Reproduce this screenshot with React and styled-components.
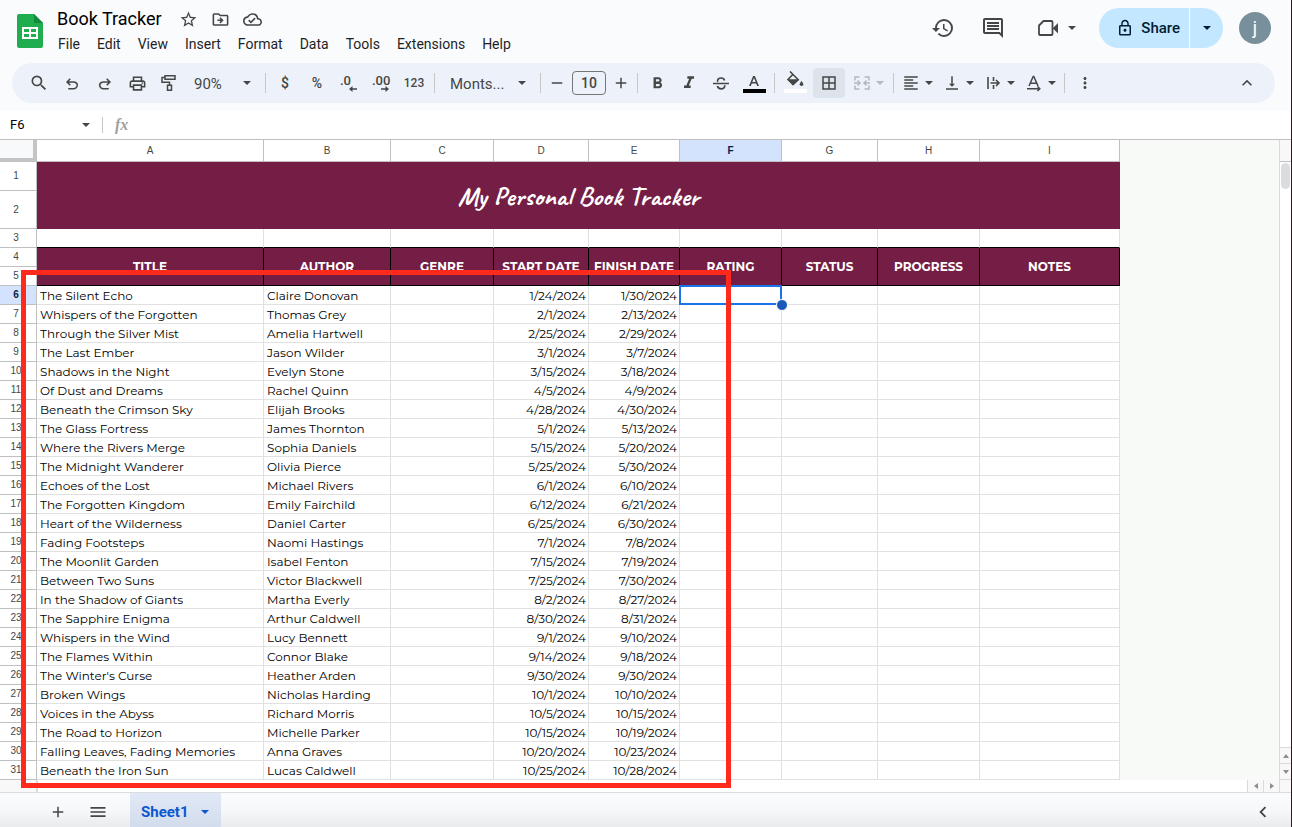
import React, {useState} from 'react'
import styled, {createGlobalStyle} from 'styled-components'
import {
    MdAdd,
    MdBorderAll,
    MdFormatAlignLeft,
    MdFormatBold,
    MdFormatItalic,
    MdHistory,
    MdKeyboardArrowLeft,
    MdKeyboardArrowUp,
    MdLockOutline,
    MdMenu,
    MdMoreVert,
    MdOutlineCloudDone,
    MdOutlineComment,
    MdOutlineDriveFileMove,
    MdOutlinePrint,
    MdRemove,
    MdSearch,
    MdStarOutline,
    MdVerticalAlignBottom,
} from 'react-icons/md'

const menus = ['File', 'Edit', 'View', 'Insert', 'Format', 'Data', 'Tools', 'Extensions', 'Help']

const columns = [
    {letter: 'A', width: 227, label: 'TITLE'},
    {letter: 'B', width: 127, label: 'AUTHOR'},
    {letter: 'C', width: 103, label: 'GENRE'},
    {letter: 'D', width: 95, label: 'START DATE'},
    {letter: 'E', width: 91, label: 'FINISH DATE'},
    {letter: 'F', width: 102, label: 'RATING'},
    {letter: 'G', width: 96, label: 'STATUS'},
    {letter: 'H', width: 102, label: 'PROGRESS'},
    {letter: 'I', width: 140, label: 'NOTES'},
]

const books = [
    ['The Silent Echo', 'Claire Donovan', '1/24/2024', '1/30/2024'],
    ['Whispers of the Forgotten', 'Thomas Grey', '2/1/2024', '2/13/2024'],
    ['Through the Silver Mist', 'Amelia Hartwell', '2/25/2024', '2/29/2024'],
    ['The Last Ember', 'Jason Wilder', '3/1/2024', '3/7/2024'],
    ['Shadows in the Night', 'Evelyn Stone', '3/15/2024', '3/18/2024'],
    ['Of Dust and Dreams', 'Rachel Quinn', '4/5/2024', '4/9/2024'],
    ['Beneath the Crimson Sky', 'Elijah Brooks', '4/28/2024', '4/30/2024'],
    ['The Glass Fortress', 'James Thornton', '5/1/2024', '5/13/2024'],
    ['Where the Rivers Merge', 'Sophia Daniels', '5/15/2024', '5/20/2024'],
    ['The Midnight Wanderer', 'Olivia Pierce', '5/25/2024', '5/30/2024'],
    ['Echoes of the Lost', 'Michael Rivers', '6/1/2024', '6/10/2024'],
    ['The Forgotten Kingdom', 'Emily Fairchild', '6/12/2024', '6/21/2024'],
    ['Heart of the Wilderness', 'Daniel Carter', '6/25/2024', '6/30/2024'],
    ['Fading Footsteps', 'Naomi Hastings', '7/1/2024', '7/8/2024'],
    ['The Moonlit Garden', 'Isabel Fenton', '7/15/2024', '7/19/2024'],
    ['Between Two Suns', 'Victor Blackwell', '7/25/2024', '7/30/2024'],
    ['In the Shadow of Giants', 'Martha Everly', '8/2/2024', '8/27/2024'],
    ['The Sapphire Enigma', 'Arthur Caldwell', '8/30/2024', '8/31/2024'],
    ['Whispers in the Wind', 'Lucy Bennett', '9/1/2024', '9/10/2024'],
    ['The Flames Within', 'Connor Blake', '9/14/2024', '9/18/2024'],
    ["The Winter's Curse", 'Heather Arden', '9/30/2024', '9/30/2024'],
    ['Broken Wings', 'Nicholas Harding', '10/1/2024', '10/10/2024'],
    ['Voices in the Abyss', 'Richard Morris', '10/5/2024', '10/15/2024'],
    ['The Road to Horizon', 'Michelle Parker', '10/15/2024', '10/19/2024'],
    ['Falling Leaves, Fading Memories', 'Anna Graves', '10/20/2024', '10/23/2024'],
    ['Beneath the Iron Sun', 'Lucas Caldwell', '10/25/2024', '10/28/2024'],
]

const Caret = () => (
    <CaretSvg viewBox='0 0 8 4' aria-hidden='true'>
        <path d='M0 0h8L4 4z' />
    </CaretSvg>
)

const SheetsLogo = () => (
    <svg width='26' height='34' viewBox='0 0 26 34' aria-hidden='true'>
        <path d='M2 0h15l9 9v23a2 2 0 0 1-2 2H2a2 2 0 0 1-2-2V2a2 2 0 0 1 2-2z' fill='#1fad50' />
        <path d='M17 0l9 9h-9z' fill='#128a3e' />
        <path d='M5 13h16v12H5zM7 15v3h5v-3zM14 15v3h5v-3zM7 20v3h5v-3zM14 20v3h5v-3z' fill='#fff' fillRule='evenodd' />
    </svg>
)

const UndoIcon = () => (
    <svg width='18' height='18' viewBox='0 -1020 960 960' fill='currentColor'>
        <path d='M280-200v-80h284q63 0 109.500-40T720-420q0-60-46.500-100T564-560H312l104 104-56 56-200-200 200-200 56 56-104 104h252q97 0 169.500 63T800-420q0 94-72.500 157T564-200H280Z' />
    </svg>
)

const RedoIcon = () => (
    <svg width='18' height='18' viewBox='0 -1020 960 960' fill='currentColor'>
        <path d='M396-200q-97 0-169.500-63T154-420q0-94 72.500-157T396-640h252L544-744l56-56 200 200-200 200-56-56 104-104H396q-63 0-109.500 40T240-420q0 60 46.500 100T396-280h284v80H396Z' />
    </svg>
)

const RollerIcon = () => (
    <svg width='18' height='18' viewBox='0 0 18 18' fill='none' stroke='currentColor' strokeWidth='1.500'>
        <path d='M5 1.750h10v3.500H5zM5 3.500H2v4.750h7.500v3M7.500 11.250h4v5h-4z' />
    </svg>
)

const DecimalIcon = ({more}) => (
    <svg width='20' height='20' viewBox='0 0 20 20'>
        <text x={more ? 1 : 1} y='12' fontFamily='Roboto, sans-serif' fontSize='13' fontWeight='500' fill='currentColor'>
            {more ? '.00' : '.0'}
        </text>
        {more
            ? <path d='M10 15.300h4.500v-2.300l3.500 3-3.500 3v-2.300H10z' fill='currentColor' />
            : <path d='M18 15.300h-4.500v-2.300l-3.500 3 3.500 3v-2.300H18z' fill='currentColor' />}
    </svg>
)

const StrikeIcon = () => (
    <svg width='18' height='18' viewBox='0 0 18 18' fill='none' stroke='currentColor'>
        <path d='M1 9.500h16' strokeWidth='1.500' />
        <path d='M12.500 6.500C12.200 4.800 11 4 9.100 4 7 4 5.600 5 5.600 6.700c0 .4.100.8.300 1.100M5.400 12c.4 1.900 1.700 2.800 3.800 2.800s3.500-1 3.500-2.700c0-.3 0-.6-.1-.9' strokeWidth='1.700' />
    </svg>
)

const FillIcon = () => (
    <svg width='24' height='24' viewBox='0 0 24 24'>
        <path d='M7 .5L15.500 9M9.800 3.500L5 8.500l5 5 5.500-5' fill='none' stroke='currentColor' strokeWidth='1.600' />
        <path d='M4.500 8.200h12L10 14.500z' fill='currentColor' />
        <path d='M18.500 10s-1.800 2-1.800 3.200a1.800 1.800 0 0 0 3.600 0c0-1.200-1.800-3.200-1.800-3.200z' fill='currentColor' />
        <path d='M1 18h23v4H1z' fill='#fff' />
    </svg>
)

const TextColorIcon = () => (
    <svg width='24' height='24' viewBox='0 0 24 24'>
        <path d='M11.100 5h1.800L17 15h-1.800l-1-2.600H9.800l-1 2.600H7zM12 6.900L10.300 11h3.400z' fill='currentColor' fillRule='evenodd' />
        <path d='M1 18h23v4H1z' fill='#000' />
    </svg>
)

const MergeIcon = () => (
    <svg width='18' height='18' viewBox='0 0 18 18' fill='none' stroke='currentColor' strokeWidth='1.500'>
        <path d='M6.500 3H2v3.500M2 11.500V15h4.500M11.500 3H16v3.500M16 11.500V15h-4.500M1 9h5.500M17 9h-5.500M4.500 6.500L7 9l-2.500 2.500M13.500 6.500L11 9l2.500 2.500' />
    </svg>
)

const OverflowIcon = () => (
    <svg width='18' height='18' viewBox='0 0 18 18' fill='none' stroke='currentColor' strokeWidth='1.600'>
        <path d='M4 3v12M9.500 3v4M9.500 11v4M6.500 9h8M12 6l3 3-3 3' />
    </svg>
)

const RotateIcon = () => (
    <svg width='18' height='18' viewBox='0 0 18 18' fill='none' stroke='currentColor' strokeWidth='1.500'>
        <path d='M4 12L8.200 2.500h.6L13 12M5.300 9.300h6.400M2 14.750h12M12.500 12.500l2.300 2.250-2.300 2.250' />
    </svg>
)

const MeetIcon = () => (
    <svg width='24' height='24' viewBox='0 0 24 24'>
        <path d='M7.500 5h8a1 1 0 0 1 1 1v12a1 1 0 0 1-1 1H4a1 1 0 0 1-1-1V9.500z' fill='none' stroke='currentColor' strokeWidth='1.800' strokeLinejoin='round' />
        <path d='M17 12l5-5v10.500l-5-5z' fill='currentColor' />
    </svg>
)

const App = () => {

    const [zoom, setZoom] = useState('90%')
    const [fontSize, setFontSize] = useState(10)
    const [cellName, setCellName] = useState('F6')

    return (
        <Page>
            <GlobalStyle />
            <TopBar>
                <SheetsLogo />
                <Document>
                    <TitleRow>
                        <DocTitle>Book Tracker</DocTitle>
                        <TitleButton aria-label='Star'><MdStarOutline size={19} /></TitleButton>
                        <TitleButton aria-label='Move'><MdOutlineDriveFileMove size={19} /></TitleButton>
                        <TitleButton aria-label='Saved to Drive'><MdOutlineCloudDone size={19} /></TitleButton>
                    </TitleRow>
                    <MenuBar>
                        {menus.map(menu => <MenuButton key={menu}>{menu}</MenuButton>)}
                    </MenuBar>
                </Document>
                <Actions>
                    <ActionButton aria-label='Version history'><MdHistory size={24} /></ActionButton>
                    <ActionButton aria-label='Comments'><MdOutlineComment size={24} /></ActionButton>
                    <MeetButton aria-label='Join a call'><MeetIcon /><Caret /></MeetButton>
                    <ShareGroup>
                        <ShareButton><MdLockOutline size={18} />Share</ShareButton>
                        <ShareMore aria-label='Sharing options'><Caret /></ShareMore>
                    </ShareGroup>
                    <Avatar aria-label='Account'>j</Avatar>
                </Actions>
            </TopBar>

            <Toolbar>
                <Tool aria-label='Search'><MdSearch size={20} /></Tool>
                <Tool $wide aria-label='Undo'><UndoIcon /></Tool>
                <Tool aria-label='Redo'><RedoIcon /></Tool>
                <Tool aria-label='Print'><MdOutlinePrint size={19} /></Tool>
                <Tool aria-label='Paint format'><RollerIcon /></Tool>
                <SelectBox $width={77}>
                    <Select aria-label='Zoom' value={zoom} onChange={e => setZoom(e.target.value)}>
                        <option>90%</option>
                        <option>100%</option>
                    </Select>
                    <Caret />
                </SelectBox>
                <Divider />
                <Tool aria-label='Currency'>$</Tool>
                <Tool aria-label='Percent'>%</Tool>
                <Tool aria-label='Fewer decimals'><DecimalIcon /></Tool>
                <Tool aria-label='More decimals'><DecimalIcon more /></Tool>
                <Tool $wide $small aria-label='More formats'>123</Tool>
                <Divider />
                <SelectBox $width={99}>
                    <Select aria-label='Font' defaultValue='Monts...' $indent>
                        <option>Monts...</option>
                    </Select>
                    <Caret />
                </SelectBox>
                <Divider />
                <StepButton aria-label='Smaller' onClick={() => setFontSize(Number(fontSize) - 1)}><MdRemove size={18} /></StepButton>
                <SizeInput aria-label='Font size' value={fontSize} onChange={e => setFontSize(e.target.value)} />
                <StepButton aria-label='Larger' onClick={() => setFontSize(Number(fontSize) + 1)}><MdAdd size={18} /></StepButton>
                <Divider />
                <Tool aria-label='Bold'><MdFormatBold size={19} /></Tool>
                <Tool aria-label='Italic'><MdFormatItalic size={20} /></Tool>
                <Tool aria-label='Strikethrough'><StrikeIcon /></Tool>
                <Tool $wide aria-label='Text color'><TextColorIcon /></Tool>
                <Divider />
                <Tool $wide aria-label='Fill color'><FillIcon /></Tool>
                <Tool $active aria-label='Borders'><MdBorderAll size={18} /></Tool>
                <DropTool $width={44} disabled aria-label='Merge cells'><MergeIcon /><Caret /></DropTool>
                <Divider />
                <DropTool $width={41} aria-label='Horizontal align'><MdFormatAlignLeft size={18} /><Caret /></DropTool>
                <DropTool $width={41} aria-label='Vertical align'><MdVerticalAlignBottom size={18} /><Caret /></DropTool>
                <DropTool $width={41} aria-label='Wrapping'><OverflowIcon /><Caret /></DropTool>
                <DropTool $width={41} aria-label='Rotation'><RotateIcon /><Caret /></DropTool>
                <Divider />
                <Tool $wide aria-label='More'><MdMoreVert size={18} /></Tool>
                <CollapseTool aria-label='Hide the menus'><MdKeyboardArrowUp size={20} /></CollapseTool>
            </Toolbar>

            <FormulaBar>
                <NameInput aria-label='Cell name' value={cellName} onChange={e => setCellName(e.target.value)} />
                <Caret />
                <NameDivider />
                <FxLabel htmlFor='formula'>fx</FxLabel>
                <FormulaInput id='formula' />
            </FormulaBar>

            <Workspace>
                <GridArea>
                    <Viewport>
                        <Table>
                            <colgroup>
                                <HeadCol />
                                {columns.map(col => <Col key={col.letter} $width={col.width} />)}
                            </colgroup>
                            <thead>
                                <Row $height={22}>
                                    <Corner />
                                    {columns.map(col => (
                                        <ColumnHead key={col.letter} scope='col' $selected={col.letter === 'F'}>{col.letter}</ColumnHead>
                                    ))}
                                </Row>
                            </thead>
                            <tbody>
                                <Row $height={29}>
                                    <RowHead scope='row'>1</RowHead>
                                    <Banner colSpan={9} rowSpan={2}>My Personal Book Tracker</Banner>
                                </Row>
                                <Row $height={38}>
                                    <RowHead scope='row'>2</RowHead>
                                </Row>
                                <Row $height={19}>
                                    <RowHead scope='row'>3</RowHead>
                                    {columns.map(col => <Cell key={col.letter} $aboveLabels />)}
                                </Row>
                                <Row $height={19}>
                                    <RowHead scope='row'>4</RowHead>
                                    {columns.map(col => <Label key={col.letter} rowSpan={2}>{col.label}</Label>)}
                                </Row>
                                <Row $height={19}>
                                    <RowHead scope='row'>5</RowHead>
                                </Row>
                                {books.map(([title, author, start, finish], index) => (
                                    <Row key={title} $height={19}>
                                        <RowHead scope='row' $selected={index === 0}>{index + 6}</RowHead>
                                        <Cell>{title}</Cell>
                                        <Cell>{author}</Cell>
                                        <Cell />
                                        <Cell $right>{start}</Cell>
                                        <Cell $right>{finish}</Cell>
                                        {index === 0 ? <SelectedCell /> : <Cell />}
                                        <Cell />
                                        <Cell />
                                        <Cell />
                                    </Row>
                                ))}
                            </tbody>
                        </Table>
                    </Viewport>
                    <HorizontalBar>
                        <BarStart />
                        <BarButton aria-label='Scroll left'>
                            <svg width='4' height='6' viewBox='0 0 4 6'><path d='M4 0v6L0 3z' /></svg>
                        </BarButton>
                        <BarButton aria-label='Scroll right'>
                            <svg width='4' height='6' viewBox='0 0 4 6'><path d='M0 0v6l4-3z' /></svg>
                        </BarButton>
                    </HorizontalBar>
                </GridArea>
                <VerticalBar>
                    <BarTop />
                    <Thumb />
                    <BarButton $stacked aria-label='Scroll up'>
                        <svg width='6' height='4' viewBox='0 0 6 4'><path d='M0 4h6L3 0z' /></svg>
                    </BarButton>
                    <BarButton $stacked aria-label='Scroll down'>
                        <svg width='6' height='4' viewBox='0 0 6 4'><path d='M0 0h6L3 4z' /></svg>
                    </BarButton>
                    <BarEnd />
                </VerticalBar>
                <Highlight />
            </Workspace>

            <SheetBar>
                <SheetButton aria-label='Add sheet'><MdAdd size={18} /></SheetButton>
                <SheetButton aria-label='All sheets'><MdMenu size={20} /></SheetButton>
                <SheetTab>Sheet1<Caret /></SheetTab>
                <PanelButton aria-label='Show side panel'><MdKeyboardArrowLeft size={22} /></PanelButton>
            </SheetBar>
        </Page>
    )
}

const GlobalStyle = createGlobalStyle`
    * {
        box-sizing: border-box;
    }

    body {
        margin: 0;
        font-family: Roboto, sans-serif;
        color: #1f1f1f;
    }

    button, input, select {
        font: inherit;
        color: inherit;
        border: none;
        padding: 0;
        background: none;
        outline: none;
    }

    button {
        cursor: pointer;
    }

    svg {
        flex-shrink: 0;
    }
`

const Page = styled.div`
    display: flex;
    flex-direction: column;
    height: 100vh;
    background-color: #f9fbfd;
    border-right: 1px solid #2b1c24;
    overflow: hidden;
`

const CaretSvg = styled.svg`
    width: 8px;
    height: 4px;
    fill: currentColor;
    pointer-events: none;
`

const TopBar = styled.header`
    display: flex;
    align-items: flex-start;
    height: 63px;
    padding: 0 20px 0 17px;
    flex-shrink: 0;

    > svg {
        margin-top: 14px;
    }
`

const Document = styled.div`
    padding: 7px 0 0 6px;
`

const TitleRow = styled.div`
    display: flex;
    align-items: center;
    height: 24px;
    padding-left: 8px;
    margin-bottom: 3px;
`

const DocTitle = styled.h1`
    margin: 0 11px 0 0;
    font-size: 18px;
    line-height: 24px;
    font-weight: 400;
    color: #000;
`

const TitleButton = styled.button`
    display: flex;
    align-items: center;
    justify-content: center;
    width: 32px;
    height: 24px;
    color: #444746;
`

const MenuBar = styled.nav`
    display: flex;
    gap: 1px;
    padding-left: 1px;
`

const MenuButton = styled.button`
    padding: 0 8px;
    height: 20px;
    font-size: 14px;
    line-height: 20px;
`

const Actions = styled.div`
    display: flex;
    align-items: center;
    margin-left: auto;
    padding-top: 8px;
    color: #444746;
`

const ActionButton = styled.button`
    display: flex;
    align-items: center;
    justify-content: center;
    width: 50px;
    height: 40px;
`

const MeetButton = styled(ActionButton)`
    width: 70px;
    margin-right: 11px;
    padding-left: 6px;
    gap: 8px;
`

const ShareGroup = styled.div`
    display: flex;
    gap: 1px;
    height: 40px;
    margin-right: 16px;
    border-radius: 20px;
    overflow: hidden;
    color: #001d35;
`

const ShareButton = styled.button`
    display: flex;
    align-items: center;
    gap: 7px;
    padding: 0 9px 0 17px;
    background-color: #c2e7ff;
    font-size: 15px;
    font-weight: 500;
`

const ShareMore = styled.button`
    display: flex;
    align-items: center;
    justify-content: center;
    width: 33px;
    background-color: #c2e7ff;
`

const Avatar = styled.button`
    width: 32px;
    height: 32px;
    border-radius: 50%;
    background-color: #78909c;
    color: #fff;
    font-size: 18px;
    line-height: 32px;
`

const Toolbar = styled.div`
    display: flex;
    align-items: center;
    height: 40px;
    margin: 0 16px 8px 12px;
    padding: 0 12px 0 11px;
    border-radius: 20px;
    background-color: #edf2fa;
    color: #444746;
    flex-shrink: 0;
`

const Tool = styled.button`
    display: flex;
    align-items: center;
    justify-content: center;
    flex-shrink: 0;
    width: ${props => (props.$wide ? '34px' : '32px')};
    height: 30px;
    margin: ${props => (props.$active ? '0 1px' : '0')};
    border-radius: 4px;
    background-color: ${props => (props.$active ? '#dde3ea' : 'transparent')};
    font-size: ${props => (props.$small ? '12px' : '14px')};
    font-weight: 500;
`

const CollapseTool = styled(Tool)`
    margin-left: auto;
`

const DropTool = styled.button`
    display: flex;
    align-items: center;
    justify-content: center;
    flex-shrink: 0;
    gap: 5px;
    width: ${props => props.$width}px;
    height: 30px;

    &:disabled {
        color: #b4b8bd;
    }
`

const SelectBox = styled.div`
    display: flex;
    align-items: center;
    flex-shrink: 0;
    width: ${props => props.$width}px;
    padding-right: 11px;
`

const Select = styled.select`
    appearance: none;
    flex: 1;
    min-width: 0;
    height: 30px;
    padding-top: 2px;
    padding-left: ${props => (props.$indent ? '12px' : '9px')};
    font-size: 15px;
`

const Divider = styled.span`
    width: 1px;
    height: 20px;
    margin: 0 3px;
    flex-shrink: 0;
    background-color: #c7c7c7;
`

const StepButton = styled.button`
    display: flex;
    align-items: center;
    justify-content: center;
    flex-shrink: 0;
    width: 26px;
    height: 24px;
`

const SizeInput = styled.input`
    width: 34px;
    height: 24px;
    margin: 0 2px;
    border: 1px solid #747775;
    border-radius: 4px;
    font-size: 14px;
    font-weight: 500;
    text-align: center;
    flex-shrink: 0;
`

const FormulaBar = styled.div`
    display: flex;
    align-items: center;
    height: 29px;
    flex-shrink: 0;
    background-color: #fff;
    border-bottom: 1px solid #c0c0c0;
    color: #444746;
`

const NameInput = styled.input`
    width: 82px;
    height: 20px;
    padding-left: 10px;
    padding-bottom: 2px;
    font-size: 13px;
    color: #000;
`

const NameDivider = styled.span`
    width: 1px;
    height: 16px;
    margin-left: 12px;
    background-color: #c7c7c7;
`

const FxLabel = styled.label`
    margin-left: 12px;
    font-family: 'Liberation Serif', serif;
    font-size: 16px;
    line-height: 20px;
    font-weight: 700;
    font-style: italic;
    color: #a0a0a0;
`

const FormulaInput = styled.input`
    flex: 1;
    height: 20px;
    margin-left: 12px;
    font-size: 13px;
`

const Workspace = styled.main`
    position: relative;
    display: flex;
    flex: 1;
    min-height: 0;
`

const GridArea = styled.div`
    display: flex;
    flex-direction: column;
    flex: 1;
    min-width: 0;
`

const Viewport = styled.div`
    flex: 1;
    min-height: 0;
    overflow: hidden;
    background-color: #f8faf7;
`

const Table = styled.table`
    table-layout: fixed;
    width: 1120px;
    border-collapse: separate;
    border-spacing: 0;
    background-color: #fff;
`

const HeadCol = styled.col`
    width: 37px;
`

const Col = styled.col`
    width: ${props => props.$width}px;
`

const Row = styled.tr`
    height: ${props => props.$height}px;
`

const Corner = styled.td`
    padding: 0;
    background-color: #f8f9fa;
    border-right: 4px solid #c4c4c4;
    border-bottom: 4px solid #c4c4c4;
`

const ColumnHead = styled.th`
    padding: 0;
    font-family: 'Liberation Sans', sans-serif;
    font-size: 10px;
    line-height: 12px;
    font-weight: ${props => (props.$selected ? 700 : 400)};
    color: ${props => (props.$selected ? '#041e49' : '#444746')};
    background-color: ${props => (props.$selected ? '#d3e3fd' : '#fff')};
    border-right: 1px solid #c0c0c0;
    border-bottom: 1px solid #c0c0c0;
`

const RowHead = styled(ColumnHead)`
    padding-right: 4px;
`

const Banner = styled.td`
    padding: 0;
    background-color: #741e46;
    color: #fff;
    font-family: Caveat, Lato, cursive;
    font-size: 27px;
    line-height: 32px;
    font-weight: 700;
    text-align: center;
`

const Cell = styled.td`
    padding: ${props => (props.$right ? '2px 2px 0 0' : '2px 0 0 3px')};
    font-family: Montserrat, Inter, sans-serif;
    font-size: 12px;
    line-height: 16px;
    color: #000;
    text-align: ${props => (props.$right ? 'right' : 'left')};
    white-space: nowrap;
    border-right: 1px solid #e1e1e1;
    border-bottom: 1px solid ${props => (props.$aboveLabels ? '#000' : '#e1e1e1')};
`

const Label = styled.th`
    padding: 0;
    font-family: Montserrat, Inter, sans-serif;
    font-size: 12px;
    line-height: 16px;
    font-weight: 700;
    color: #fff;
    white-space: nowrap;
    background-color: #741e46;
    border-right: 1px solid #000;
    border-bottom: 1px solid #000;
`

const SelectedCell = styled(Cell)`
    position: relative;

    &::before {
        content: '';
        position: absolute;
        inset: -1px;
        border: 2px solid #1a73e8;
    }

    &::after {
        content: '';
        position: absolute;
        right: -7px;
        bottom: -7px;
        width: 10px;
        height: 10px;
        border: 1px solid #fff;
        border-radius: 50%;
        background-color: #185abc;
        z-index: 1;
    }
`

const HorizontalBar = styled.div`
    display: flex;
    justify-content: flex-end;
    height: 12px;
    flex-shrink: 0;
    background-color: #fff;
`

const BarStart = styled.span`
    width: 38px;
    margin-right: auto;
    background-color: #f8f8f8;
    border-right: 2px solid #dadada;
`

const BarButton = styled.button`
    display: flex;
    align-items: center;
    justify-content: center;
    width: ${props => (props.$stacked ? '100%' : '16px')};
    height: ${props => (props.$stacked ? '16px' : '100%')};
    flex-shrink: 0;
    background-color: #f8f8f8;
    border-left: ${props => (props.$stacked ? 'none' : '1px solid #dadada')};
    border-top: ${props => (props.$stacked ? '1px solid #dadada' : 'none')};

    svg {
        fill: #8d8d8d;
    }
`

const VerticalBar = styled.div`
    display: flex;
    flex-direction: column;
    width: 12px;
    flex-shrink: 0;
    background-color: #fff;
    border-left: 1px solid #dadada;
`

const BarTop = styled.span`
    height: 22px;
    flex-shrink: 0;
    background-color: #f8f8f8;
    border-bottom: 1px solid #c0c0c0;
`

const Thumb = styled.span`
    width: 9px;
    height: 26px;
    margin: 1px 1px auto;
    border-radius: 5px;
    background-color: #dadce0;
`

const BarEnd = styled.span`
    height: 13px;
    flex-shrink: 0;
    background-color: #f8f8f8;
    border-top: 1px solid #dadada;
`

const Highlight = styled.div`
    position: absolute;
    top: 130px;
    left: 21px;
    width: 710px;
    height: 518px;
    border: 5px solid #ff2a1c;
    pointer-events: none;
    z-index: 2;
`

const SheetBar = styled.footer`
    display: flex;
    height: 35px;
    flex-shrink: 0;
    padding: 0 8px 0 38px;
    border-top: 1px solid #dadce0;
    background-image: linear-gradient(#f9fbfd, #f6f8fa 50%, #e9ebed);
    color: #444746;
`

const SheetButton = styled.button`
    display: flex;
    align-items: center;
    justify-content: center;
    width: 40px;
    padding-top: 3px;
`

const SheetTab = styled.button`
    display: flex;
    align-items: center;
    gap: 12px;
    margin-left: 12px;
    padding: 3px 12px 0 11px;
    background-image: linear-gradient(#e1e9f7, #d3dcec);
    color: #0b57d0;
    font-size: 15px;
    font-weight: 700;
`

const PanelButton = styled(SheetButton)`
    margin-left: auto;
`

export default App
